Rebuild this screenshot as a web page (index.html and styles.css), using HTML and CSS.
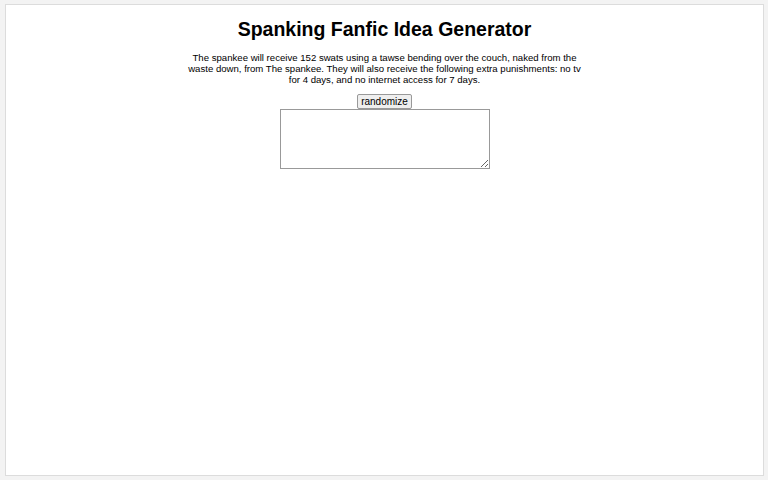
FILE: index.html
```html
<!DOCTYPE html>
<html lang="en">
<head>
  <meta charset="UTF-8" />
  <meta name="viewport" content="width=device-width, initial-scale=1.0"/>
  <title>Spanking Fanfic Idea Generator</title>
  <link rel="stylesheet" href="styles.css">
</head>
<body>

  <div class="page">
    <h1>Spanking Fanfic Idea Generator</h1>

    <p class="idea" id="idea">
      The spankee will receive 152 swats using a tawse bending over the couch, naked from the waste down, from The spankee. They will also receive the following extra punishments: no tv for 4 days, and no internet access for 7 days.
    </p>

    <button class="randomize">randomize</button>
    <textarea class="notes"></textarea>
  </div>

</body>
</html>
```

FILE: styles.css
```css
body {
  font-family: 'Liberation Sans', Arial, sans-serif;
  background-color: #f3f3f3;
  color: #000;
  margin: 0;
  padding: 4px 4px 4px 5px;
}

.page {
  background-color: #fff;
  border: 1px solid #dcdcdc;
  height: 472px;
  box-sizing: border-box;
  display: flex;
  flex-direction: column;
  align-items: center;
}

h1 {
  font-size: 19.5px;
  margin: 13px 0 11px;
}

.idea {
  width: 396px;
  font-size: 9.6px;
  line-height: 11px;
  text-align: center;
  margin: 0 0 9px;
}

.randomize {
  font-family: 'Liberation Sans', Arial, sans-serif;
  font-size: 10px;
  padding: 1px 3px;
  margin: 0;
  border: 1px solid #999;
  border-radius: 2px;
  background-color: #efefef;
}

.notes {
  width: 210px;
  height: 60px;
  box-sizing: border-box;
  margin: 0;
  border: 1px solid #999;
}
```
